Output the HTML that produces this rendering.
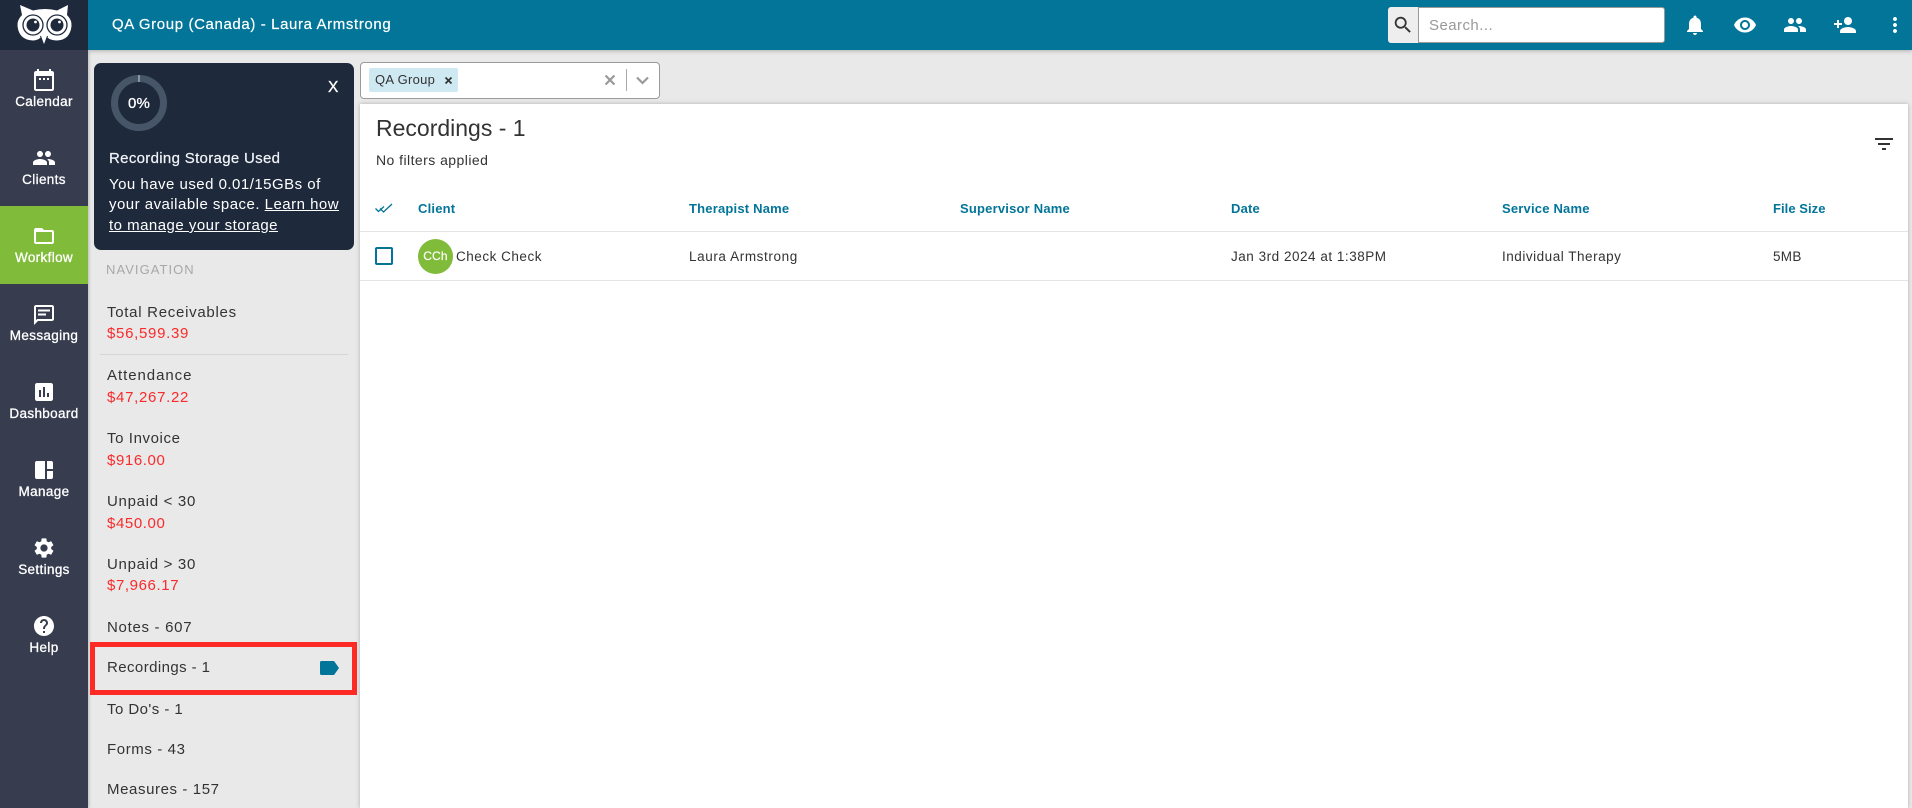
<!DOCTYPE html>
<html lang="en"><head><meta charset="utf-8"><title>Recordings</title>
<style>
html,body{margin:0;padding:0;width:1912px;height:808px;overflow:hidden;background:#e9e9e9;font-family:"Liberation Sans",sans-serif;color:#333}
.a{position:absolute;white-space:nowrap}
.t{position:absolute;white-space:nowrap;line-height:20px;height:20px;transform:translateY(-10px)}
.nav{left:0;width:88px;text-align:center;color:#fff;font-size:13.5px;letter-spacing:.35px;-webkit-text-stroke:.3px #fff}
.ic{position:absolute;fill:#fff}
.m{left:107px;font-size:15px;letter-spacing:.6px;color:#333}
.r{left:107px;font-size:15px;letter-spacing:.6px;color:#fb2a2a}
.h{font-size:13px;font-weight:bold;color:#027599;letter-spacing:.2px}
.c{font-size:13.5px;color:#333;letter-spacing:.52px}
</style></head><body>
<div class="a" style="left:88px;top:0;width:1824px;height:50px;background:#027599;box-shadow:0 1px 4px rgba(0,0,0,.25)"></div>
<div class="a" style="left:0;top:50px;width:88px;height:758px;background:#373d4f;box-shadow:1px 0 3px rgba(0,0,0,.2)"></div>
<div class="a" style="left:0;top:0;width:88px;height:50px;background:#1e293b"></div>
<svg class="a" style="left:16px;top:4px" width="56" height="42" viewBox="0 0 56 42">
<path d="M4 1L17 6.500Q29 3.500 41 6.500L52 1L51 11Q56 16 55.500 22Q54 36 41 36.500Q34 36.500 31 33L28 41L25 33Q22 36.500 17 36.500Q3 36 1.500 22Q1 16 6 11Z" fill="#fff"/>
<path d="M24.500 32L28 41.500L31.500 32" fill="none" stroke="#1e293b" stroke-width="1"/>
<circle cx="17" cy="21" r="10" fill="none" stroke="#1e293b" stroke-width="1.300"/><circle cx="41" cy="21" r="10" fill="none" stroke="#1e293b" stroke-width="1.300"/>
<circle cx="17" cy="21" r="6.500" fill="#1e293b"/><circle cx="41" cy="21" r="6.500" fill="#1e293b"/>
<circle cx="19.500" cy="18" r="1.400" fill="#fff"/><circle cx="43.500" cy="18" r="1.400" fill="#fff"/>
</svg>
<div class="t" style="left:112px;top:25px;font-size:15px;color:#fff;letter-spacing:.62px;-webkit-text-stroke:.2px #fff">QA Group (Canada) - Laura Armstrong</div>

<div class="a" style="left:0;top:206px;width:88px;height:78px;background:#80bc39"></div>
<svg class="ic" style="left:32px;top:68px" width="24" height="24" viewBox="0 0 24 24"><path d="M20 3h-1V1h-2v2H7V1H5v2H4c-1.100 0-2 .9-2 2v16c0 1.100.9 2 2 2h16c1.100 0 2-.9 2-2V5c0-1.100-.9-2-2-2zm0 18H4V8h16v13z"/><path d="M7 10h2v2H7zm4 0h2v2h-2zm4 0h2v2h-2z"/></svg>
<div class="t nav" style="top:101.500px">Calendar</div>
<svg class="ic" style="left:32px;top:146px" width="24" height="24" viewBox="0 0 24 24"><path d="M16 11c1.660 0 2.990-1.340 2.990-3S17.660 5 16 5c-1.660 0-3 1.340-3 3s1.340 3 3 3zm-8 0c1.660 0 2.990-1.340 2.990-3S9.660 5 8 5C6.340 5 5 6.340 5 8s1.340 3 3 3zm0 2c-2.330 0-7 1.170-7 3.500V19h14v-2.500c0-2.330-4.670-3.500-7-3.500zm8 0c-.29 0-.62.020-.97.050 1.160.84 1.970 1.970 1.970 3.450V19h6v-2.500c0-2.330-4.670-3.500-7-3.500z"/></svg>
<div class="t nav" style="top:179.500px">Clients</div>
<svg class="ic" style="left:32px;top:224px" width="24" height="24" viewBox="0 0 24 24"><path d="M20 6h-8l-2-2H4c-1.100 0-1.990.9-1.990 2L2 18c0 1.100.9 2 2 2h16c1.100 0 2-.9 2-2V8c0-1.100-.9-2-2-2zm0 12H4V8h16v10z"/></svg>
<div class="t nav" style="top:257.500px">Workflow</div>
<svg class="ic" style="left:32px;top:303px" width="24" height="24" viewBox="0 0 24 24"><path d="M20 2H4c-1.100 0-1.990.9-1.990 2L2 22l4-4h14c1.100 0 2-.9 2-2V4c0-1.100-.9-2-2-2zm0 14H5.170L4 17.170V4h16v12zM6 6.500h12v2H6zm0 4h8v2H6z"/></svg>
<div class="t nav" style="top:335.500px">Messaging</div>
<svg class="ic" style="left:32px;top:380px" width="24" height="24" viewBox="0 0 24 24"><path d="M19 3H5c-1.100 0-2 .9-2 2v14c0 1.100.9 2 2 2h14c1.100 0 2-.9 2-2V5c0-1.100-.9-2-2-2zM9 17H7v-7h2v7zm4 0h-2V7h2v10zm4 0h-2v-4h2v4z"/></svg>
<div class="t nav" style="top:413.500px">Dashboard</div>
<svg class="ic" style="left:35px;top:461px" width="18" height="18" viewBox="0 0 18 18"><path d="M2 0h8v18H2a2 2 0 01-2-2V2a2 2 0 012-2zM12 0h4a2 2 0 012 2v6h-6zM12 10h6v6a2 2 0 01-2 2h-4z"/></svg>
<div class="t nav" style="top:491.500px">Manage</div>
<svg class="ic" style="left:32px;top:536px" width="24" height="24" viewBox="0 0 24 24"><path d="M19.140 12.940c.04-.3.06-.61.06-.94 0-.32-.02-.64-.07-.94l2.030-1.580c.18-.14.23-.41.12-.61l-1.920-3.320c-.12-.22-.37-.29-.59-.22l-2.390.96c-.5-.38-1.030-.7-1.620-.94l-.36-2.540c-.04-.24-.24-.41-.48-.41h-3.840c-.24 0-.43.17-.47.41l-.36 2.540c-.59.24-1.130.57-1.620.94l-2.390-.96c-.22-.08-.47 0-.59.22L2.740 8.870c-.12.21-.08.47.12.61l2.030 1.580c-.05.3-.09.63-.09.94s.02.64.07.94l-2.030 1.580c-.18.14-.23.41-.12.61l1.920 3.320c.12.22.37.29.59.22l2.390-.96c.5.38 1.030.7 1.620.94l.36 2.540c.05.24.24.41.48.41h3.840c.24 0 .44-.17.47-.41l.36-2.540c.59-.24 1.130-.56 1.620-.94l2.390.96c.22.08.47 0 .59-.22l1.920-3.320c.12-.22.07-.47-.12-.61l-2.010-1.580zM12 15.600c-1.980 0-3.600-1.620-3.600-3.600s1.620-3.600 3.600-3.600 3.600 1.620 3.600 3.600-1.620 3.600-3.600 3.600z"/></svg>
<div class="t nav" style="top:569.500px">Settings</div>
<svg class="ic" style="left:32px;top:614px" width="24" height="24" viewBox="0 0 24 24"><path d="M12 2C6.480 2 2 6.480 2 12s4.480 10 10 10 10-4.480 10-10S17.520 2 12 2zm1 17h-2v-2h2v2zm2.070-7.750l-.9.92C13.450 12.900 13 13.500 13 15h-2v-.5c0-1.100.45-2.100 1.170-2.830l1.240-1.260c.37-.36.59-.86.59-1.410 0-1.100-.9-2-2-2s-2 .9-2 2H8c0-2.210 1.790-4 4-4s4 1.790 4 4c0 .88-.36 1.680-.93 2.250z"/></svg>
<div class="t nav" style="top:647.500px">Help</div>

<!-- storage card -->
<div class="a" style="left:94px;top:63px;width:260px;height:187px;background:#1e293b;border-radius:7px"></div>
<svg class="a" style="left:111px;top:75px" width="56" height="56" viewBox="0 0 56 56"><circle cx="28" cy="28" r="24.500" fill="none" stroke="#475569" stroke-width="7"/><rect x="27.500" y="0" width="1" height="7" fill="#cbd5e1"/></svg>
<div class="t" style="left:111px;width:56px;text-align:center;top:103.500px;font-size:15px;color:#fff;letter-spacing:.1px;-webkit-text-stroke:.3px #fff">0%</div>
<div class="t" style="left:328px;top:88px;font-size:15.5px;color:#fff;-webkit-text-stroke:.3px #fff">X</div>
<div class="t" style="left:109px;top:158.500px;font-size:15px;color:#f1f5f9;letter-spacing:.32px;-webkit-text-stroke:.2px #f1f5f9">Recording Storage Used</div>
<div class="t" style="left:109px;top:184.500px;font-size:15px;color:#fff;letter-spacing:.48px">You have used 0.01/15GBs of</div>
<div class="t" style="left:109px;top:205px;font-size:15px;color:#fff;letter-spacing:.48px">your available space. <u>Learn how</u></div>
<div class="t" style="left:109px;top:226px;font-size:15px;color:#fff;letter-spacing:.48px"><u>to manage your storage</u></div>

<!-- nav list -->
<div class="t" style="left:106px;top:270px;font-size:13px;color:#a8a8a8;letter-spacing:1.05px">NAVIGATION</div>
<div class="t m" style="top:313px;letter-spacing:.72px">Total Receivables</div><div class="t r" style="top:334px;letter-spacing:.7px">$56,599.39</div>
<div class="a" style="left:100px;top:354px;width:248px;height:1px;background:#d6d6d6"></div>
<div class="t m" style="top:376px;letter-spacing:.95px">Attendance</div><div class="t r" style="top:397.500px;letter-spacing:.7px">$47,267.22</div>
<div class="t m" style="top:439px;letter-spacing:.6px">To Invoice</div><div class="t r" style="top:460.500px">$916.00</div>
<div class="t m" style="top:502px;letter-spacing:.7px">Unpaid &lt; 30</div><div class="t r" style="top:523.500px">$450.00</div>
<div class="t m" style="top:564.500px;letter-spacing:.7px">Unpaid &gt; 30</div><div class="t r" style="top:586px">$7,966.17</div>
<div class="t m" style="top:628px;letter-spacing:.7px">Notes - 607</div>
<div class="t m" style="top:668px;letter-spacing:.42px">Recordings - 1</div>
<div class="t m" style="top:710px;letter-spacing:.45px">To Do's - 1</div>
<div class="t m" style="top:750px">Forms - 43</div>
<div class="t m" style="top:790px">Measures - 157</div>
<div class="a" style="left:90px;top:642px;width:257px;height:43px;border:5px solid #fd2a25"></div>
<svg class="a" style="left:320px;top:661px" width="19" height="14" viewBox="0 0 19 14"><path d="M1.500 0H14l5 7-5 7H1.500A1.500 1.500 0 010 12.500v-11A1.500 1.500 0 011.500 0z" fill="#027599"/></svg>

<!-- select -->
<div class="a" style="left:360px;top:62px;width:298px;height:35px;background:#fff;border:1px solid #9a9a9a;border-radius:4px"></div>
<div class="a" style="left:369px;top:68px;width:89px;height:24px;background:#cfe9f3;border-radius:2px"></div>
<div class="t" style="left:375px;top:79.500px;font-size:13px;color:#333;letter-spacing:.3px">QA Group</div>
<svg class="a" style="left:444px;top:76px" width="9" height="9" viewBox="0 0 9 9"><path d="M1.500 1.500l6 6m0-6l-6 6" stroke="#333" stroke-width="1.700" fill="none"/></svg>
<svg class="a" style="left:605px;top:75px" width="10" height="10" viewBox="0 0 10 10"><path d="M.5.500l9 9m0-9l-9 9" stroke="#999" stroke-width="2.200" fill="none"/></svg>
<div class="a" style="left:626px;top:69px;width:1px;height:22px;background:#aaa"></div>
<svg class="a" style="left:636px;top:76px" width="13" height="9" viewBox="0 0 13 9"><path d="M1 1.500l5.500 5.500L12 1.500" stroke="#999" stroke-width="2.200" fill="none"/></svg>

<!-- main card -->
<div class="a" style="left:360px;top:104px;width:1548px;height:704px;background:#fff;box-shadow:0 0 4px rgba(0,0,0,.25)"></div>
<div class="t" style="left:376px;top:128px;font-size:23px;line-height:30px;height:30px;transform:translateY(-15px);color:#333;letter-spacing:0">Recordings - 1</div>
<div class="t" style="left:376px;top:159.500px;font-size:14px;color:#333;letter-spacing:.45px">No filters applied</div>
<svg class="a" style="left:1872px;top:132px;fill:#333" width="24" height="24" viewBox="0 0 24 24"><path d="M10 18h4v-2h-4v2zM3 6v2h18V6H3zm3 7h12v-2H6v2z"/></svg>
<svg class="a" style="left:375px;top:203px" width="19" height="11" viewBox="0 0 19 11"><path d="M.5 5.500l3 3L9 3.500M5 5.500L8.500 9 17 1" stroke="#027599" stroke-width="1.300" fill="none"/></svg>
<div class="t h" style="left:418px;top:209px">Client</div>
<div class="t h" style="left:689px;top:209px">Therapist Name</div>
<div class="t h" style="left:960px;top:209px">Supervisor Name</div>
<div class="t h" style="left:1231px;top:209px">Date</div>
<div class="t h" style="left:1502px;top:209px">Service Name</div>
<div class="t h" style="left:1773px;top:209px;letter-spacing:.05px">File Size</div>
<div class="a" style="left:360px;top:231px;width:1548px;height:1px;background:#e4e4e4"></div>
<div class="a" style="left:375px;top:247px;width:14px;height:14px;border:2px solid #027599;border-radius:2px"></div>
<div class="a" style="left:418px;top:239px;width:35px;height:35px;border-radius:50%;background:#80bc39"></div>
<div class="t" style="left:418px;width:35px;text-align:center;top:256px;font-size:12px;color:#fff;letter-spacing:.2px;-webkit-text-stroke:.2px #fff">CCh</div>
<div class="t c" style="left:456px;top:256.500px">Check Check</div>
<div class="t c" style="left:689px;top:256.500px;letter-spacing:.6px">Laura Armstrong</div>
<div class="t c" style="left:1231px;top:256.500px">Jan 3rd 2024 at 1:38PM</div>
<div class="t c" style="left:1502px;top:256.500px">Individual Therapy</div>
<div class="t c" style="left:1773px;top:256.500px;letter-spacing:.3px">5MB</div>
<div class="a" style="left:360px;top:280px;width:1548px;height:1px;background:#e4e4e4"></div>

<!-- top right -->
<div class="a" style="left:1388px;top:7px;width:30px;height:36px;background:#eee;border-radius:3px 0 0 3px"></div>
<svg class="a" style="left:1392px;top:14px;fill:#333" width="22" height="22" viewBox="0 0 24 24"><path d="M15.500 14h-.79l-.28-.27C15.410 12.590 16 11.110 16 9.500 16 5.910 13.090 3 9.500 3S3 5.910 3 9.500 5.910 16 9.500 16c1.610 0 3.090-.59 4.230-1.570l.27.28v.79l5 4.990L20.490 19l-4.990-5zm-6 0C7.010 14 5 11.990 5 9.500S7.010 5 9.500 5 14 7.010 14 9.500 11.990 14 9.500 14z"/></svg>
<div class="a" style="left:1418px;top:7px;width:245px;height:34px;background:#fff;border:1px solid #999;border-radius:0 3px 3px 0"></div>
<div class="t" style="left:1429px;top:26px;font-size:15px;color:#999;letter-spacing:.45px">Search...</div>
<svg class="ic" style="left:1683px;top:13px" width="24" height="24" viewBox="0 0 24 24"><path d="M12 22c1.100 0 2-.9 2-2h-4c0 1.100.9 2 2 2zm6-6v-5c0-3.070-1.630-5.640-4.500-6.320V4c0-.83-.67-1.500-1.500-1.500s-1.500.67-1.500 1.500v.68C7.640 5.360 6 7.920 6 11v5l-2 2v1h16v-1l-2-2z"/></svg>
<svg class="ic" style="left:1733px;top:13px" width="24" height="24" viewBox="0 0 24 24"><path d="M12 4.500C7 4.500 2.730 7.610 1 12c1.730 4.390 6 7.500 11 7.500s9.270-3.110 11-7.500c-1.730-4.390-6-7.500-11-7.500zM12 17c-2.760 0-5-2.240-5-5s2.240-5 5-5 5 2.240 5 5-2.240 5-5 5zm0-8c-1.660 0-3 1.340-3 3s1.340 3 3 3 3-1.340 3-3-1.340-3-3-3z"/></svg>
<svg class="ic" style="left:1783px;top:13px" width="24" height="24" viewBox="0 0 24 24"><path d="M16 11c1.660 0 2.990-1.340 2.990-3S17.660 5 16 5c-1.660 0-3 1.340-3 3s1.340 3 3 3zm-8 0c1.660 0 2.990-1.340 2.990-3S9.660 5 8 5C6.340 5 5 6.340 5 8s1.340 3 3 3zm0 2c-2.330 0-7 1.170-7 3.500V19h14v-2.500c0-2.330-4.670-3.500-7-3.500zm8 0c-.29 0-.62.020-.97.050 1.160.84 1.970 1.970 1.970 3.450V19h6v-2.500c0-2.330-4.670-3.500-7-3.500z"/></svg>
<svg class="ic" style="left:1833px;top:13px" width="24" height="24" viewBox="0 0 24 24"><path d="M15 12c2.210 0 4-1.790 4-4s-1.790-4-4-4-4 1.790-4 4 1.790 4 4 4zm-9-2V7H4v3H1v2h3v3h2v-3h3v-2H6zm9 4c-2.670 0-8 1.340-8 4v2h16v-2c0-2.660-5.330-4-8-4z"/></svg>
<svg class="ic" style="left:1883px;top:13px" width="24" height="24" viewBox="0 0 24 24"><path d="M12 8c1.100 0 2-.9 2-2s-.9-2-2-2-2 .9-2 2 .9 2 2 2zm0 2c-1.100 0-2 .9-2 2s.9 2 2 2 2-.9 2-2-.9-2-2-2zm0 6c-1.100 0-2 .9-2 2s.9 2 2 2 2-.9 2-2-.9-2-2-2z"/></svg>
</body></html>
